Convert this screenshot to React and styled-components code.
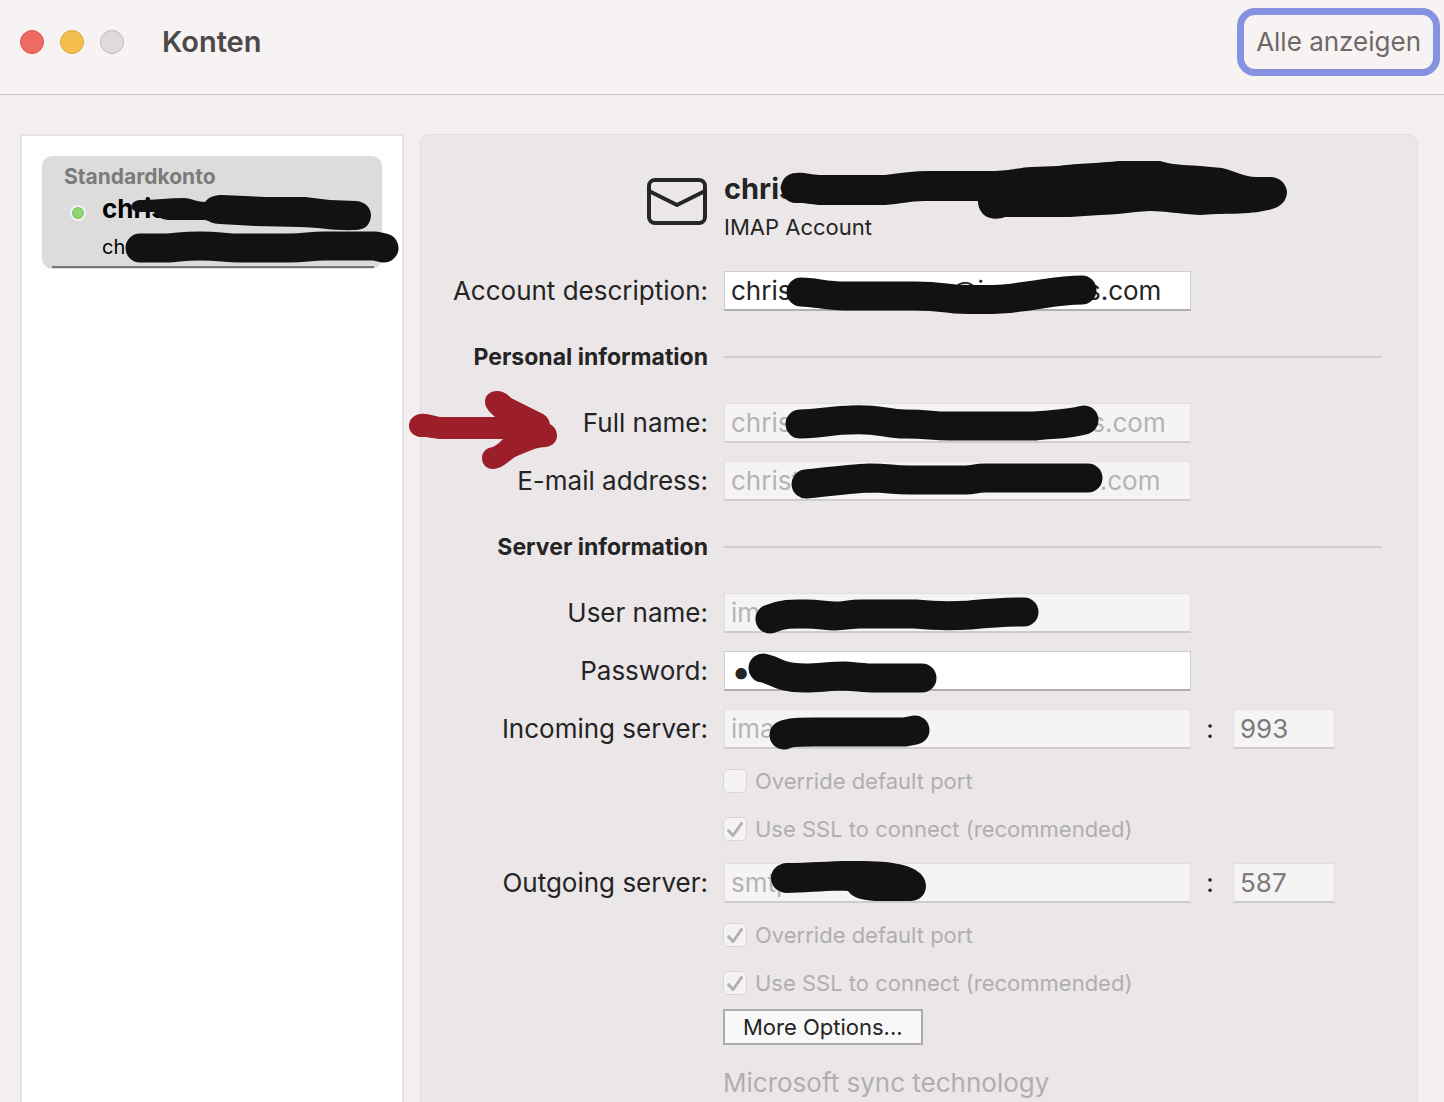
import React from "react";
import styled, { createGlobalStyle } from "styled-components";

const Global = createGlobalStyle`
  *, *::before, *::after { box-sizing: border-box; }
  body { margin: 0; background: #f3eeef; }
  body, input, button { font-family: Inter, "Liberation Sans", sans-serif; }
`;

const Window = styled.div`
  position: relative;
  display: flex;
  flex-direction: column;
  height: 100vh;
  overflow: hidden;
  background: #f3eeef;
  color: #242424;
`;

const TitleBar = styled.header`
  display: flex;
  align-items: center;
  flex-shrink: 0;
  padding: 8px 4px 18px 20px;
  background: #f8f3f3;
  border-bottom: 1px solid #cdc8c8;
`;

const Lights = styled.div`
  display: flex;
  gap: 16px;
`;

const Light = styled.button`
  width: 24px;
  height: 24px;
  padding: 0;
  border: 1px solid ${(p) => p.$edge};
  border-radius: 50%;
  background: ${(p) => p.$fill};
`;

const Title = styled.h1`
  flex: 1;
  margin: 0 0 0 38px;
  font-size: 29px;
  line-height: 36px;
  font-weight: 600;
  color: #4b4949;
`;

const ShowAll = styled.button`
  height: 68px;
  padding: 0 12px;
  border: 7px solid #8692df;
  border-radius: 18px;
  background: transparent;
  font-size: 26px;
  line-height: 32px;
  color: #6d6969;
`;

const Body = styled.main`
  display: flex;
  flex: 1;
  gap: 16px;
  min-height: 0;
  padding: 39px 26px 0 20px;
`;

const Sidebar = styled.nav`
  flex: 0 0 384px;
  padding: 20px;
  background: #fff;
  border: 2px solid #e5e3e4;
  border-bottom: 0;
`;

const Account = styled.a`
  display: block;
  padding: 8px 8px 1px 10px;
  border-radius: 10px;
  background: #dcdcdc;
  color: #000;
  text-decoration: none;
`;

const AccountKind = styled.div`
  padding-left: 12px;
  font-size: 21px;
  line-height: 26px;
  font-weight: 700;
  color: #7b7b7b;
`;

const AccountBody = styled.div`
  display: grid;
  grid-template-columns: 16px 1fr;
  column-gap: 16px;
  align-items: center;
  padding-left: 18px;
  border-bottom: 2px solid #747574;
`;

const Dot = styled.span`
  align-self: end;
  width: 16px;
  height: 16px;
  margin-bottom: 7px;
  border: 2px solid #f2f2f2;
  border-radius: 50%;
  background: #8bd672;
  box-shadow: inset 0 0 0 1px #74bf5d;
`;

const AccountName = styled.strong`
  font-size: 26px;
  line-height: 38px;
  font-weight: 700;
`;

const AccountMail = styled.span`
  grid-column: 2;
  font-size: 20px;
  line-height: 38px;
`;

const Panel = styled.form`
  flex: 1;
  min-width: 0;
  padding: 34px 35px 0 0;
  background: #ebe7e8;
  border: 1px solid #e1dddd;
  border-bottom: 0;
  border-radius: 10px 10px 0 0;
`;

const Row = styled.div`
  display: grid;
  grid-template-columns: 287px 1fr;
  column-gap: 16px;
  align-items: center;
`;

const Heading = styled(Row)`
  align-items: start;
  margin-bottom: 30px;
`;

const MailIcon = styled.svg`
  justify-self: end;
  width: 62px;
  height: 50px;
  margin-top: 8px;
`;

const Name = styled.h2`
  margin: 0 0 4px;
  font-size: 29px;
  line-height: 40px;
  font-weight: 700;
`;

const Kind = styled.p`
  margin: 0;
  font-size: 22px;
  line-height: 28px;
`;

const Fields = styled.div`
  display: grid;
  row-gap: 18px;
`;

const Label = styled.label`
  justify-self: end;
  font-size: 26px;
  line-height: 40px;
  white-space: nowrap;
`;

const Controls = styled.div`
  display: flex;
  align-items: center;
`;

const Input = styled.input`
  width: ${(p) => (p.$port ? "102px" : "467px")};
  height: 40px;
  padding: 0 6px;
  border: 1px solid #d2cfd0;
  border-bottom: 2px solid #b0aeaf;
  border-radius: 0;
  outline: 0;
  background: #fff;
  font-size: 26px;
  color: #242424;

  &[type="password"] {
    font-size: 36px;
  }

  &:disabled {
    background: #f5f3f4;
    border-color: #e2dfe0;
    border-bottom-color: #cfcccd;
    color: ${(p) => (p.$port ? "#7c7a7b" : "#b5b3b4")};
  }
`;

const Colon = styled.span`
  width: 42px;
  padding-right: 4px;
  text-align: center;
  font-size: 26px;
  line-height: 40px;
`;

const SectionTitle = styled.h3`
  justify-self: end;
  margin: 0;
  font-size: 23px;
  line-height: 32px;
  font-weight: 700;
`;

const Section = styled(Row)`
  margin: 30px 0;
`;

const Rule = styled.hr`
  width: 100%;
  margin: 0;
  border: 0;
  border-top: 2px solid #d1cecf;
`;

const Options = styled.div`
  display: grid;
  row-gap: 24px;
  justify-items: start;
  margin: 20px 0 ${(p) => (p.$last ? "14px" : "22px")} 302px;
`;

const Option = styled.label`
  position: relative;
  display: flex;
  align-items: center;
  gap: 8px;
  font-size: 22px;
  line-height: 24px;
  color: #b1aeaf;
`;

const Box = styled.input`
  appearance: none;
  width: 24px;
  height: 24px;
  margin: 0;
  border: 1px solid #d9d6d7;
  border-radius: 5px;
  background: #f4f2f3;
`;

const Tick = styled.svg`
  position: absolute;
  left: 0;
  top: 0;
  width: 24px;
  height: 24px;
`;

const Footer = styled.div`
  margin-left: 302px;
`;

const More = styled.button`
  display: block;
  height: 36px;
  padding: 0 18px;
  border: 2px solid #adabab;
  background: #f8f8f8;
  font-size: 22px;
  line-height: 28px;
  color: #242424;
`;

const Sync = styled.p`
  margin: 22px 0 0;
  font-size: 26px;
  line-height: 32px;
  color: #b1aeaf;
`;

const Ink = styled.svg`
  position: absolute;
  left: 0;
  top: 0;
  width: 1444px;
  height: 1102px;
  pointer-events: none;
`;

const gap = (n) => " ".repeat(n);

function Field({ id, label, value, type = "text", disabled, port }) {
  return (
    <Row>
      <Label htmlFor={id}>{label}</Label>
      <Controls>
        <Input id={id} type={type} defaultValue={value} disabled={disabled} autoComplete="off" />
        {port && (
          <>
            <Colon>:</Colon>
            <Input $port aria-label={`${label} port`} defaultValue={port} disabled />
          </>
        )}
      </Controls>
    </Row>
  );
}

function Check({ children, checked }) {
  return (
    <Option>
      <Box type="checkbox" defaultChecked={checked} disabled />
      {checked && (
        <Tick viewBox="0 0 24 24" fill="none" stroke="#b3b0b1" strokeWidth="3" strokeLinecap="round" strokeLinejoin="round" aria-hidden="true">
          <path d="M5.5 13.5 L10 18.5 L18.5 6.5" />
        </Tick>
      )}
      {children}
    </Option>
  );
}

function Divider({ children }) {
  return (
    <Section>
      <SectionTitle>{children}</SectionTitle>
      <Rule />
    </Section>
  );
}

const blots = [
  "M140 200 C155 200 170 198 185 198 C193 199 198 202 205 202 C209 197 214 195 222 195 L265 197 L305 197 L330 200 L356 201 C366 202 371 208 371 216 C370 225 365 230 355 230 C335 231 315 227 300 227 L255 226 L220 224 C212 224 210 221 205 220 L168 220 C160 219 156 216 154 212 L138 212 C128 210 130 201 140 200Z",
  "M796 173 C805 172 810 175 820 175 L885 175 C900 173 915 171 930 171 L995 171 C1015 170 1022 167 1032 167 L1058 166 C1070 164 1100 163 1120 161 L1160 161 C1170 164 1180 165 1200 166 L1222 168 C1235 171 1245 177 1256 177 L1272 177 C1282 178 1287 186 1287 193 C1286 202 1280 208 1268 210 C1250 215 1220 213 1200 215 C1180 214 1165 211 1150 211 C1130 212 1115 215 1100 215 L1070 217 L1005 217 C1000 219 990 220 984 215 C979 210 978 205 978 201 L925 201 C910 201 900 204 885 205 L820 205 C810 204 805 203 796 203 C787 203 781 196 781 188 C781 180 787 173 796 173Z",
  "M786 863 C810 863 830 861 850 861 C870 861 885 861 898 864 C914 867 926 874 926 886 C926 895 919 901 910 901 L875 901 C860 900 852 897 848 891 C830 890 805 893 786 893 C777 892 771 886 771 878 C771 870 777 864 786 863Z",
];

const strokes = [
  "M140 248 L168 248 C180 247 185 246 200 246 C220 246 225 248 240 248 L290 248 C305 248 310 246 325 246 L375 246 L384 248",
  "M801 292 C815 292 825 296 845 296 L915 296 C935 296 945 298 955 299 C980 300 1005 300 1020 297 C1045 294 1060 290 1082 290",
  "M800 424 C825 423 835 420 850 420 C878 418 885 424 905 424 C930 424 930 426 950 426 L1035 426 C1055 424 1070 424 1084 420",
  "M806 484 C825 482 850 479 870 478 C890 478 890 480 910 480 L965 480 C975 480 975 478 985 478 L1088 478",
  "M770 619 C785 613 795 614 805 614 C820 614 825 616 835 616 C845 616 850 614 860 614 L915 614 C935 616 955 616 970 615 C990 613 1005 612 1024 612",
  "M763 668 C775 670 778 678 805 678 C820 678 830 676 845 676 C860 677 865 678 875 678 L922 678",
  "M784 735 C790 732 800 732 815 732 L905 732 L915 730",
];

export default function App() {
  return (
    <Window>
      <Global />
      <TitleBar>
        <Lights>
          <Light type="button" aria-label="Close" $fill="#ed6b60" $edge="#d8564c" />
          <Light type="button" aria-label="Minimize" $fill="#f5bf4f" $edge="#d9a43e" />
          <Light type="button" aria-label="Zoom" $fill="#dfdadb" $edge="#bfbabb" />
        </Lights>
        <Title>Konten</Title>
        <ShowAll type="button">Alle anzeigen</ShowAll>
      </TitleBar>
      <Body>
        <Sidebar>
          <Account href="#account">
            <AccountKind>Standardkonto</AccountKind>
            <AccountBody>
              <Dot />
              <AccountName>chris</AccountName>
              <AccountMail>chr</AccountMail>
            </AccountBody>
          </Account>
        </Sidebar>
        <Panel>
          <Heading>
            <MailIcon viewBox="0 0 62 50" fill="none" stroke="#242627" strokeWidth="4" strokeLinejoin="round" aria-hidden="true">
              <rect x="3" y="3" width="56" height="43" rx="6" />
              <path d="M3 14 L31 28 L59 14" />
            </MailIcon>
            <div>
              <Name>chris</Name>
              <Kind>IMAP Account</Kind>
            </div>
          </Heading>
          <Field id="description" label="Account description:" value={`chris${gap(22)}@im${gap(11)}s.com`} />
          <Divider>Personal information</Divider>
          <Fields>
            <Field id="name" label="Full name:" value={`chris${gap(41)}s.com`} disabled />
            <Field id="mail" label="E-mail address:" value={`christ${gap(41)}.com`} disabled />
          </Fields>
          <Divider>Server information</Divider>
          <Fields>
            <Field id="user" label="User name:" value="im" disabled />
            <Field id="password" label="Password:" type="password" value="x" />
            <Field id="incoming" label="Incoming server:" value="ima" port="993" disabled />
          </Fields>
          <Options>
            <Check>Override default port</Check>
            <Check checked>Use SSL to connect (recommended)</Check>
          </Options>
          <Field id="outgoing" label="Outgoing server:" value="smtp" port="587" disabled />
          <Options $last>
            <Check checked>Override default port</Check>
            <Check checked>Use SSL to connect (recommended)</Check>
          </Options>
          <Footer>
            <More type="button">More Options...</More>
            <Sync>Microsoft sync technology</Sync>
          </Footer>
        </Panel>
      </Body>
      <Ink viewBox="0 0 1444 1102" aria-hidden="true">
        <g fill="#121212">
          {blots.map((d) => <path key={d} d={d} />)}
        </g>
        <g fill="none" stroke="#121212" strokeWidth="29" strokeLinecap="round" strokeLinejoin="round">
          {strokes.map((d) => <path key={d} d={d} />)}
        </g>
        <path
          d="M420 414 C428 413 433 416 440 417 L495 417 C490 412 485 408 485 402 C485 395 490 391 497 391 C503 391 507 394 511 398 L543 414 C548 417 549 420 550 424 C555 427 557 431 557 436 C557 442 552 446 546 447 C537 447 529 451 515 457 C508 462 501 469 493 469 C486 469 482 464 482 458 C482 452 486 448 493 447 C497 445 500 442 503 439 L440 439 C432 438 428 437 420 437 C413 436 409 431 409 426 C409 420 413 415 420 414Z"
          fill="#9c1e29"
        />
      </Ink>
    </Window>
  );
}
